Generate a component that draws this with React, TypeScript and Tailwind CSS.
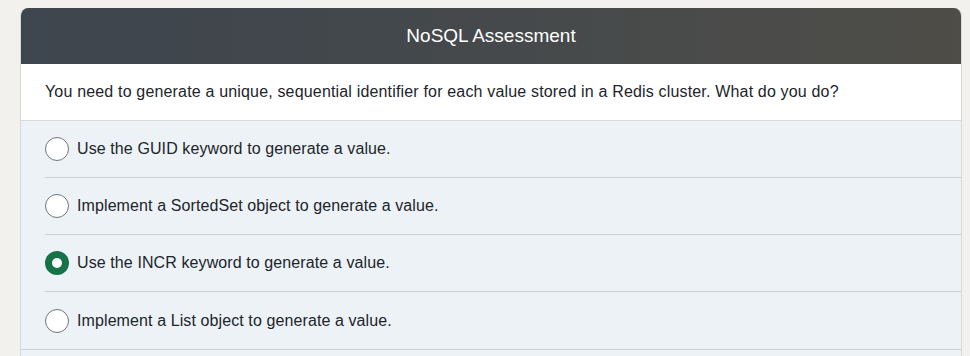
const options = [
  { id: "a", text: "Use the GUID keyword to generate a value." },
  { id: "b", text: "Implement a SortedSet object to generate a value." },
  { id: "c", text: "Use the INCR keyword to generate a value." },
  { id: "d", text: "Implement a List object to generate a value." },
];

const Radio = ({ checked }: { checked: boolean }) =>
  checked ? (
    <span className="flex h-6 w-6 shrink-0 items-center justify-center rounded-full bg-[#157347]">
      <span className="h-[10px] w-[10px] rounded-full bg-white" />
    </span>
  ) : (
    <span className="h-6 w-6 shrink-0 rounded-full border border-[#6f757b] bg-white" />
  );

const App = () => {
  const selected = "c";
  return (
    <div className="h-[356px] w-full overflow-hidden bg-[#f2f1ee] pt-2 font-['Liberation_Sans',Arial,sans-serif] text-[#212529]">
      <div className="ml-5 w-[942px] overflow-hidden rounded-t-lg border-x border-[#d8d8d8] bg-white">
        <div className="flex h-14 items-center justify-center bg-gradient-to-r from-[#3d454e] to-[#4e4d48] text-[19px] text-white">
          NoSQL Assessment
        </div>
        <div className="flex h-[57px] items-center border-b border-[#d6d9dc] px-6 text-base tracking-[0.17px]">
          You need to generate a unique, sequential identifier for each value
          stored in a Redis cluster. What do you do?
        </div>
        <div className="border-b border-[#cdd1d6] bg-[#edf2f7] pl-6">
          {options.map((o, i) => (
            <label
              key={o.id}
              className={`flex h-[57px] items-center gap-2 ${
                i < options.length - 1 ? "border-b border-[#cdd1d6]" : ""
              }`}
            >
              <Radio checked={o.id === selected} />
              <span className="text-base tracking-[0.1px]">{o.text}</span>
            </label>
          ))}
        </div>
        <div className="h-10 bg-[#edf2f7]" />
      </div>
    </div>
  );
};

export default App;
